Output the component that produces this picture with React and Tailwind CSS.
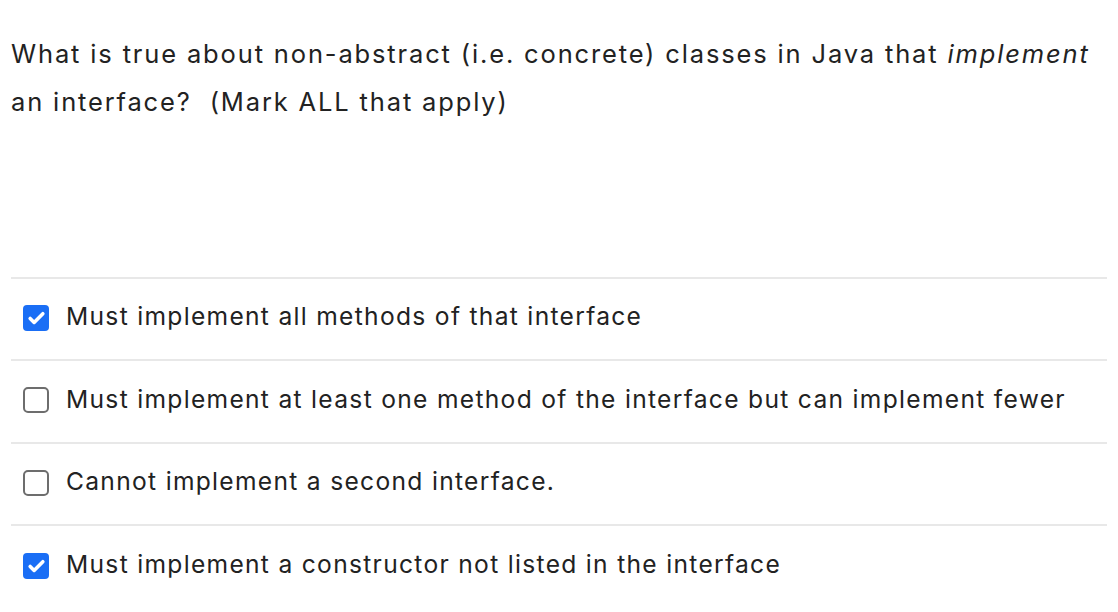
import { Check } from "lucide-react";

const options = [
    { text: "Must implement all methods of that interface", checked: true },
    { text: "Must implement at least one method of the interface but can implement fewer", checked: false },
    { text: "Cannot implement a second interface.", checked: false },
    { text: "Must implement a constructor not listed in the interface", checked: true },
];

const Box = ({ checked }) =>
    checked ? (
        <div className="size-[26px] rounded-[4px] bg-[#1a6ef5] flex items-center justify-center shrink-0">
            <Check className="size-[19px] text-white" strokeWidth={4.5} />
        </div>
    ) : (
        <div className="size-[26px] rounded-[5px] border-2 border-[#6d6d6d] bg-white shrink-0" />
    );

export default function App() {
    return (
        <div className="w-[1118px] h-[612px] bg-white overflow-hidden font-['Inter',sans-serif]">
            <p className="pl-[11px] pr-[8px] pt-[30px] text-[25.5px] leading-[48px] tracking-[1.85px] text-[#222]">
                What is true about non-abstract (i.e. concrete) classes in Java that <i>implement</i> an interface?&nbsp; (Mark ALL that apply)
            </p>
            <div className="mt-[151px] mx-[11px] border-t-2 border-[#e8e8e8]">
                {options.map((opt, i) => (
                    <div
                        key={i}
                        className="flex items-center gap-[17px] h-[82.3px] pl-[12px] pb-[2px] border-b-2 border-[#e8e8e8] last:border-b-0"
                    >
                        <Box checked={opt.checked} />
                        <span className="text-[24.6px] tracking-[1.3px] text-[#222] -mt-[3px]">{opt.text}</span>
                    </div>
                ))}
            </div>
        </div>
    );
}
